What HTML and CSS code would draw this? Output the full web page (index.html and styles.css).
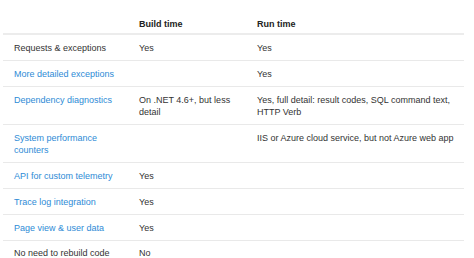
FILE: index.html
```html
<!DOCTYPE html>
<html>
  <head>
  <title>Build time vs run time</title>
  <link rel="stylesheet" href="styles.css">
</head>
  <body>
    <table class="compare">
      <thead>
        <tr>
          <th class="col-feature"></th>
          <th class="col-build">Build time</th>
          <th class="col-run">Run time</th>
        </tr>
      </thead>
      <tbody>
        <tr>
          <td>Requests &amp; exceptions</td>
          <td>Yes</td>
          <td>Yes</td>
        </tr>
        <tr>
          <td><a href="#">More detailed exceptions</a></td>
          <td></td>
          <td>Yes</td>
        </tr>
        <tr>
          <td><a href="#">Dependency diagnostics</a></td>
          <td>On .NET 4.6+, but less detail</td>
          <td>Yes, full detail: result codes, SQL command text, HTTP Verb</td>
        </tr>
        <tr>
          <td><a href="#">System performance counters</a></td>
          <td></td>
          <td>IIS or Azure cloud service, but not Azure web app</td>
        </tr>
        <tr>
          <td><a href="#">API for custom telemetry</a></td>
          <td>Yes</td>
          <td></td>
        </tr>
        <tr>
          <td><a href="#">Trace log integration</a></td>
          <td>Yes</td>
          <td></td>
        </tr>
        <tr>
          <td><a href="#">Page view &amp; user data</a></td>
          <td>Yes</td>
          <td></td>
        </tr>
        <tr class="last">
          <td>No need to rebuild code</td>
          <td>No</td>
          <td></td>
        </tr>
      </tbody>
    </table>
  </body>
</html>
```

FILE: styles.css
```css
body{
  margin:0;
  padding:0 10px 0 3px;
  background:#fff;
  font-family:"Segoe UI","Liberation Sans",Arial,sans-serif;
  font-size:9px;
  color:#333;
}

.compare{
  width:461px;
  border-collapse:collapse;
  table-layout:fixed;
}

.compare th,
.compare td{
  text-align:left;
  vertical-align:top;
  padding:7px 10px 6px 11px;
  line-height:12px;
  border-bottom:1px solid #e9e9e9;
}

.compare th{
  font-weight:bold;
  color:#222;
  padding-top:18px;
  padding-bottom:3px;
  border-bottom:2px solid #ececec;
}

.compare .last td{
  border-bottom:none;
  padding-top:6px;
}

.col-feature{
  width:104px;
}
.col-build{
  width:97px;
}

a{
  color:#2e8bd6;
  text-decoration:none;
}
```
